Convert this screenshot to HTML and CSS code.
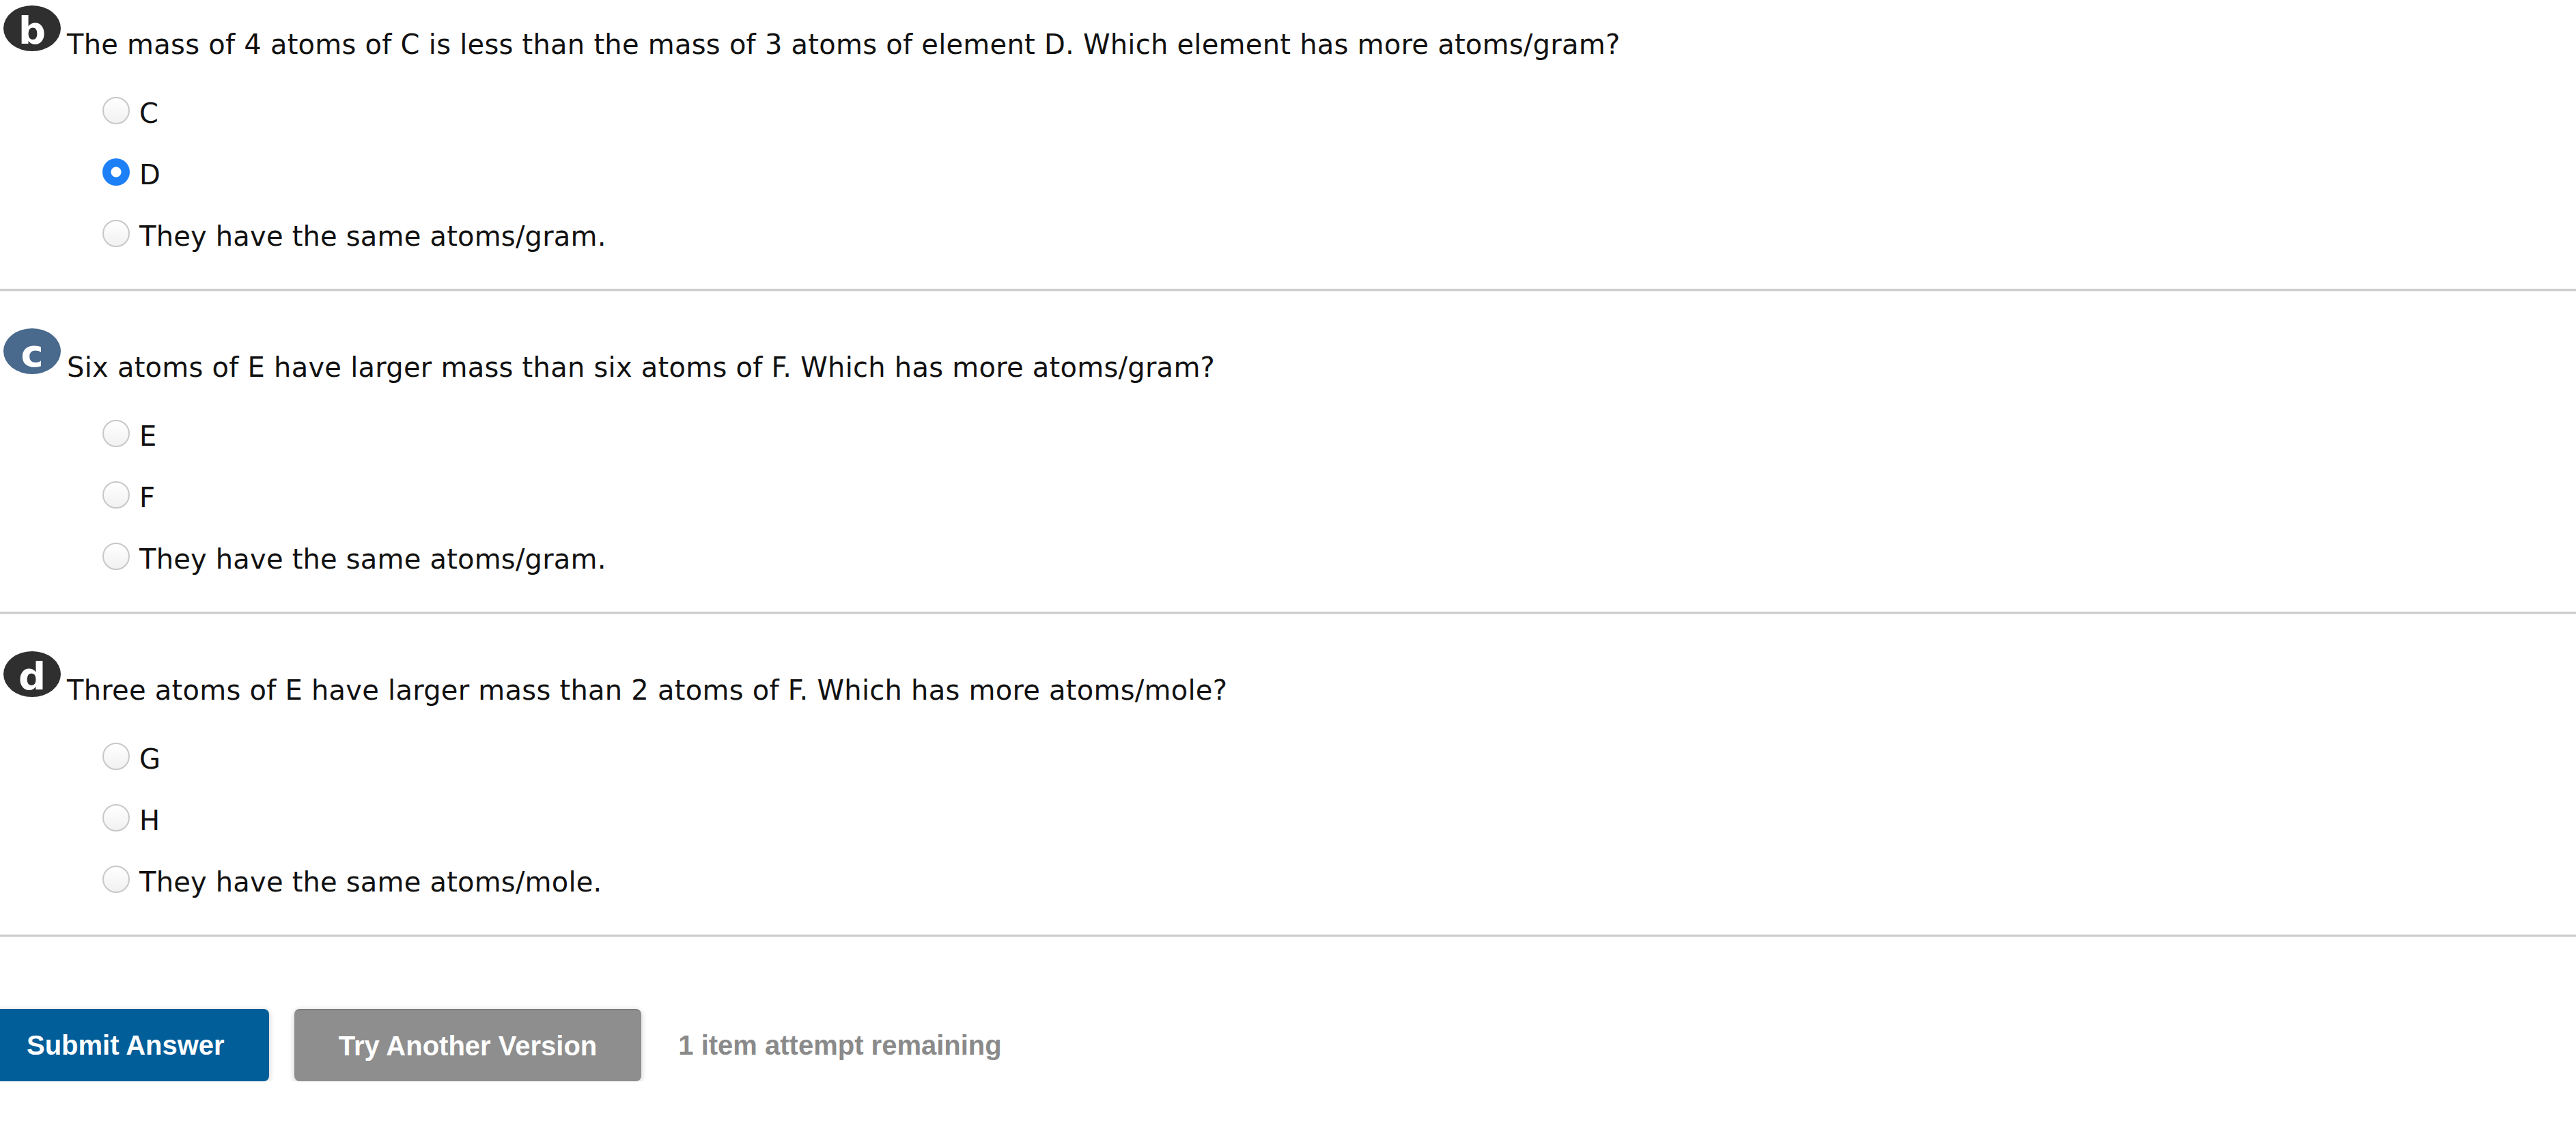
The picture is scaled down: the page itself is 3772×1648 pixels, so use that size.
FILE: index.html
```html
<!DOCTYPE html>
<html lang="en">
<head>
    <meta charset="UTF-8">
    <meta name="viewport" content="width=device-width, initial-scale=1.0">
    <title>Atoms per gram</title>
    <link rel="stylesheet" href="styles.css">
</head>
<body>

<div class="quiz">
    <section class="part">
        <div class="question">
            <span class="badge badge-dark">b</span>
            <p class="prompt">The mass of 4 atoms of C is less than the mass of 3 atoms of element D. Which element has more atoms/gram?</p>
        </div>
        <ul class="choices">
            <li><label class="choice"><input type="radio" name="qb"> C</label></li>
            <li><label class="choice"><input type="radio" name="qb" checked> D</label></li>
            <li><label class="choice"><input type="radio" name="qb"> They have the same atoms/gram.</label></li>
        </ul>
    </section>

    <section class="part">
        <div class="question">
            <span class="badge badge-blue">c</span>
            <p class="prompt">Six atoms of E have larger mass than six atoms of F. Which has more atoms/gram?</p>
        </div>
        <ul class="choices">
            <li><label class="choice"><input type="radio" name="qc"> E</label></li>
            <li><label class="choice"><input type="radio" name="qc"> F</label></li>
            <li><label class="choice"><input type="radio" name="qc"> They have the same atoms/gram.</label></li>
        </ul>
    </section>

    <section class="part">
        <div class="question">
            <span class="badge badge-dark">d</span>
            <p class="prompt">Three atoms of E have larger mass than 2 atoms of F. Which has more atoms/mole?</p>
        </div>
        <ul class="choices">
            <li><label class="choice"><input type="radio" name="qd"> G</label></li>
            <li><label class="choice"><input type="radio" name="qd"> H</label></li>
            <li><label class="choice"><input type="radio" name="qd"> They have the same atoms/mole.</label></li>
        </ul>
    </section>

    <div class="actions">
        <button class="btn btn-submit">Submit Answer</button>
        <button class="btn btn-retry">Try Another Version</button>
        <span class="attempts">1 item attempt remaining</span>
    </div>
</div>

</body>
</html>
```

FILE: styles.css
```css
body {
    margin: 0;
    background-color: #fff;
    color: #111;
    font-family: "DejaVu Sans", Verdana, sans-serif;
    overflow: hidden;
}

.quiz {
    margin-top: -47px;
}

.part {
    padding: 55px 0 53px;
    border-bottom: 3px solid #cdcdcd;
    box-shadow: 0 1px 0 #ececec;
}

.question {
    display: flex;
    align-items: flex-end;
    padding-left: 5px;
}

.badge {
    width: 84px;
    height: 67px;
    margin-bottom: 14px;
    margin-right: 9px;
    border-radius: 50%;
    flex-shrink: 0;
    color: #fff;
    font-size: 56px;
    font-weight: bold;
    line-height: 73px;
    text-align: center;
}

.badge-dark {
    background-color: #2f2f2f;
}

.badge-blue {
    background-color: #49698d;
}

.prompt {
    margin: 0;
    font-size: 40px;
    line-height: 48px;
    letter-spacing: 0.25px;
}

.choices {
    list-style: none;
    margin: 53px 0 0;
    padding: 0 0 0 150px;
    display: flex;
    flex-direction: column;
    gap: 42px;
}

.choice {
    display: flex;
    align-items: flex-start;
    gap: 14px;
    font-size: 40px;
    line-height: 48px;
    letter-spacing: 0.2px;
}

.choice input {
    appearance: none;
    -webkit-appearance: none;
    margin: 0;
    width: 40px;
    height: 40px;
    border-radius: 50%;
    border: 2px solid #c8c8c8;
    background: linear-gradient(#fff, #f1f1f1);
    box-sizing: border-box;
    flex-shrink: 0;
}

.choice input:checked {
    border: none;
    background: radial-gradient(circle, #fff 0 7px, #1d80f6 8px);
}

.actions {
    display: flex;
    align-items: center;
    margin: 106px 0 0 -26px;
}

.btn {
    height: 106px;
    padding: 0 65px;
    border: none;
    border-radius: 8px;
    color: #fff;
    font-family: "Liberation Sans", Arial, sans-serif;
    font-size: 40px;
    font-weight: bold;
    box-shadow: 0 2px 8px rgba(0, 0, 0, 0.22);
}

.btn-submit {
    background-color: #025e99;
    margin-right: 37px;
}

.btn-retry {
    background-color: #8e8e8e;
    border-top: 2px solid #7d7d7d;
    margin-right: 54px;
}

.attempts {
    color: #8a8a8a;
    font-family: "Liberation Sans", Arial, sans-serif;
    font-size: 40px;
    font-weight: bold;
}
```
